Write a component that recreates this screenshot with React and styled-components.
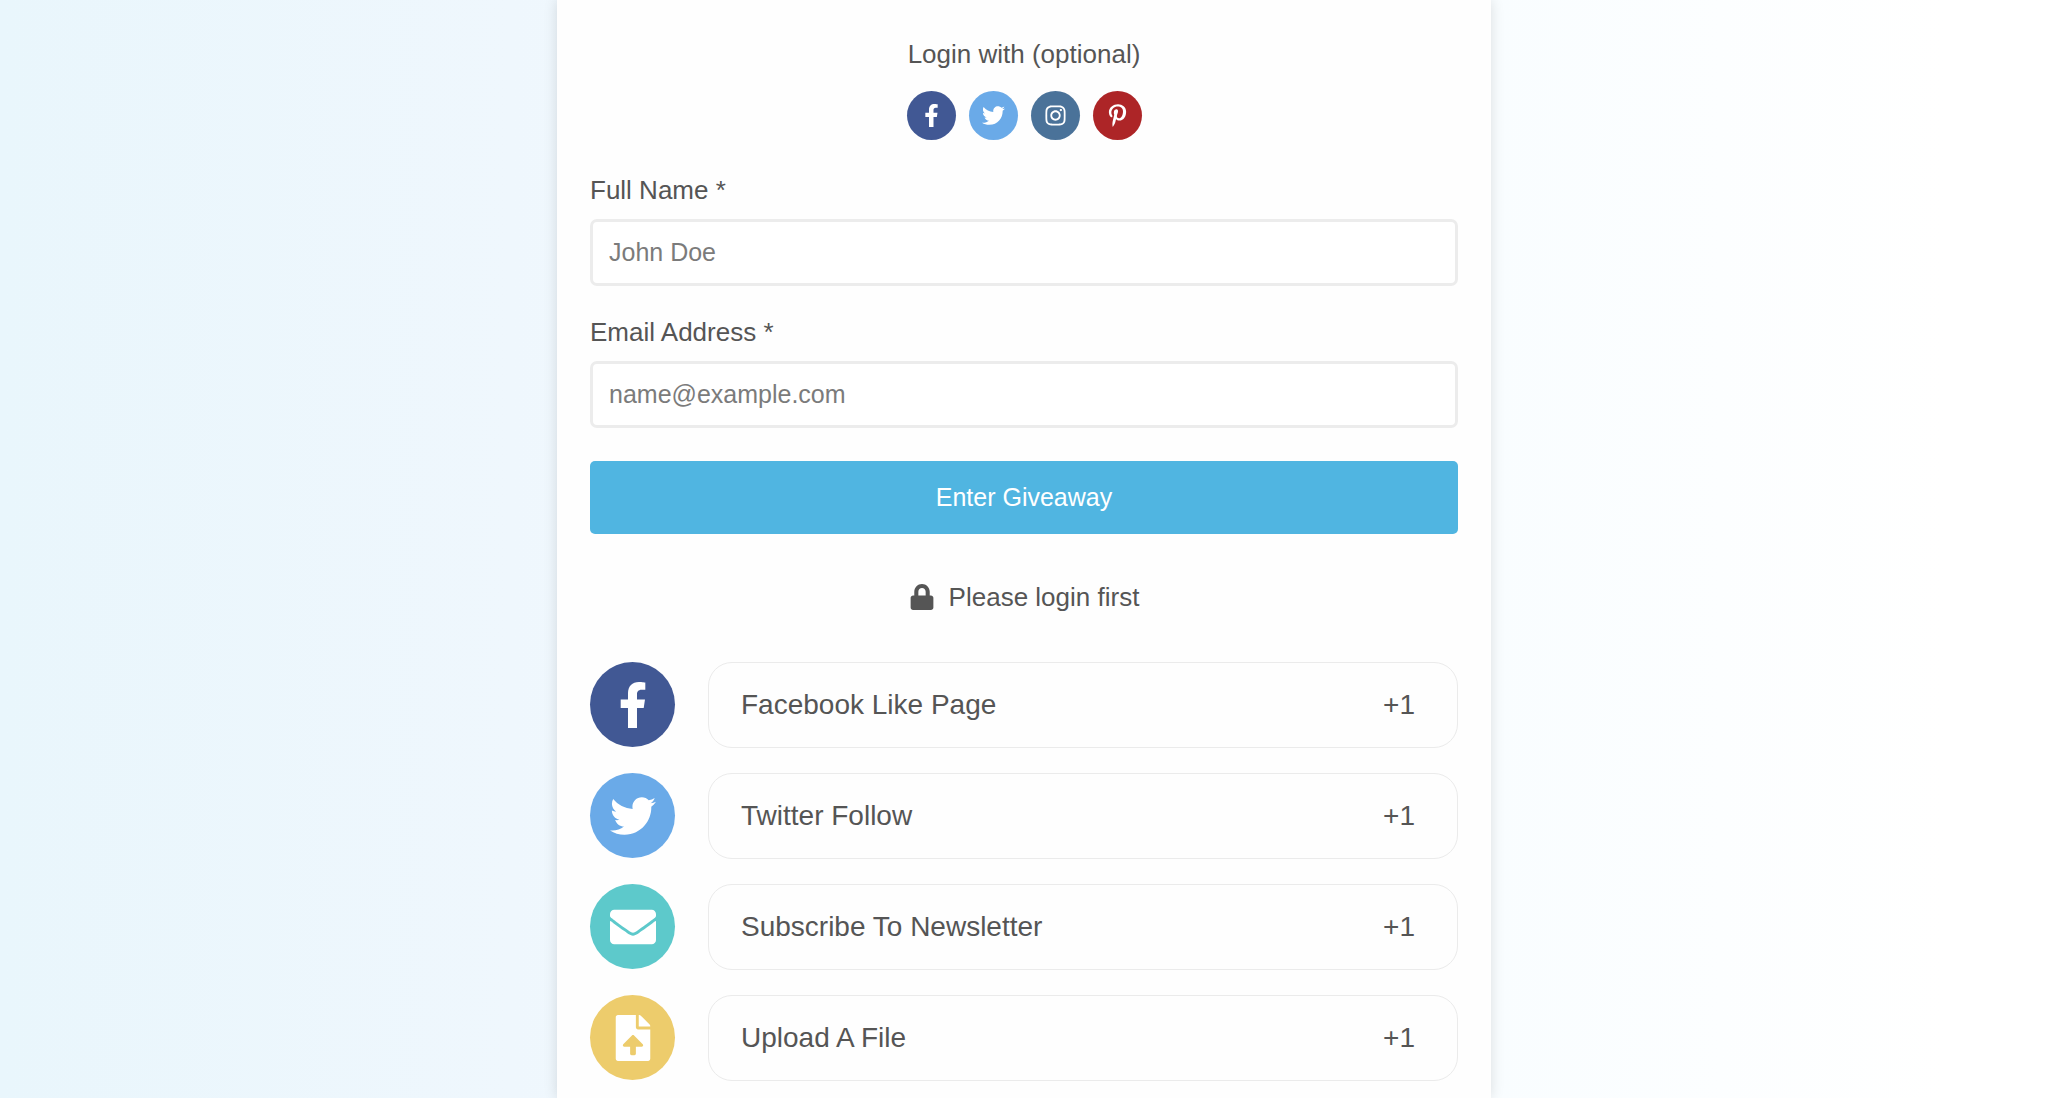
import React, { useState } from "react";
import styled, { createGlobalStyle } from "styled-components";
import {
  FaEnvelope,
  FaFacebookF,
  FaFileUpload,
  FaInstagram,
  FaLock,
  FaPinterestP,
  FaTwitter,
} from "react-icons/fa";

const networks = [
  { name: "Facebook", color: "#415894", Icon: FaFacebookF },
  { name: "Twitter", color: "#6aaae8", Icon: FaTwitter },
  { name: "Instagram", color: "#4a7299", Icon: FaInstagram },
  { name: "Pinterest", color: "#ad2527", Icon: FaPinterestP },
];

const actions = [
  { title: "Facebook Like Page", color: "#415894", Icon: FaFacebookF },
  { title: "Twitter Follow", color: "#6aaae8", Icon: FaTwitter },
  { title: "Subscribe To Newsletter", color: "#5dc9cb", Icon: FaEnvelope },
  { title: "Upload A File", color: "#edcc6c", Icon: FaFileUpload },
];

const App = () => {
  const [name, setName] = useState("");
  const [email, setEmail] = useState("");

  return (
    <>
      <GlobalStyle />
      <Page>
        <Card>
          <LoginTitle>Login with (optional)</LoginTitle>
          <Networks>
            {networks.map(({ name, color, Icon }) => (
              <NetworkButton key={name} type="button" color={color} aria-label={name}>
                <Icon />
              </NetworkButton>
            ))}
          </Networks>
          <form onSubmit={(e) => e.preventDefault()}>
            <Field>
              <Label htmlFor="name">Full Name *</Label>
              <Input
                id="name"
                type="text"
                placeholder="John Doe"
                value={name}
                onChange={(e) => setName(e.target.value)}
              />
            </Field>
            <Field>
              <Label htmlFor="email">Email Address *</Label>
              <Input
                id="email"
                type="email"
                placeholder="name@example.com"
                value={email}
                onChange={(e) => setEmail(e.target.value)}
              />
            </Field>
            <SubmitButton type="submit">Enter Giveaway</SubmitButton>
          </form>
          <Notice>
            <FaLock />
            Please login first
          </Notice>
          <ActionList>
            {actions.map(({ title, color, Icon }) => (
              <ActionItem key={title}>
                <ActionIcon color={color}>
                  <Icon />
                </ActionIcon>
                <ActionButton type="button">
                  <span>{title}</span>
                  <span>+1</span>
                </ActionButton>
              </ActionItem>
            ))}
          </ActionList>
        </Card>
      </Page>
    </>
  );
};

export default App;

const GlobalStyle = createGlobalStyle`
  * {
    box-sizing: border-box;
  }

  body {
    margin: 0;
    color: #555555;
    font-family: "Liberation Sans", Arial, sans-serif;
    font-size: 26px;
    line-height: 34px;
  }

  button,
  input {
    font-family: inherit;
  }
`;

const Page = styled.div`
  min-height: 100vh;
  display: flex;
  justify-content: center;
  background: linear-gradient(90deg, #e9f6fc 0%, #eff7fd 25%, #f9fdff 73%, #ffffff 95%);
`;

const Card = styled.main`
  width: 100%;
  max-width: 934px;
  padding: 37px 33px 16px;
  background: #fefefe;
  box-shadow: 0 0 13px rgba(0, 0, 0, 0.13);
`;

const LoginTitle = styled.div`
  text-align: center;
`;

const Networks = styled.div`
  display: flex;
  justify-content: center;
  gap: 13px;
  margin: 20px 0 33px;
`;

const NetworkButton = styled.button`
  width: 49px;
  height: 49px;
  padding: 0;
  display: flex;
  align-items: center;
  justify-content: center;
  border: none;
  border-radius: 50%;
  background: ${(props) => props.color};
  color: #ffffff;
  font-size: 23px;
  cursor: pointer;
`;

const Field = styled.div`
  margin-bottom: 29px;
`;

const Label = styled.label`
  display: block;
  margin-bottom: 12px;
`;

const Input = styled.input`
  display: block;
  width: 100%;
  height: 67px;
  padding: 0 16px;
  border: 3px solid #ececec;
  border-radius: 7px;
  background: #ffffff;
  color: #555555;
  font-size: 25px;

  &::placeholder {
    color: #7b7b7b;
  }
`;

const SubmitButton = styled.button`
  display: block;
  width: 100%;
  height: 73px;
  margin-top: 33px;
  border: none;
  border-radius: 5px;
  background: #50b5e1;
  color: #ffffff;
  font-size: 25px;
  cursor: pointer;
`;

const Notice = styled.div`
  display: flex;
  align-items: center;
  justify-content: center;
  gap: 14px;
  margin: 46px 0 48px;
`;

const ActionList = styled.ul`
  display: flex;
  flex-direction: column;
  gap: 25px;
  margin: 0;
  padding: 0;
  list-style: none;
`;

const ActionItem = styled.li`
  display: flex;
  align-items: flex-start;
  gap: 33px;
`;

const ActionIcon = styled.div`
  flex: none;
  width: 85px;
  height: 85px;
  display: flex;
  align-items: center;
  justify-content: center;
  border-radius: 50%;
  background: ${(props) => props.color};
  color: #ffffff;
  font-size: 46px;
`;

const ActionButton = styled.button`
  flex: 1;
  height: 86px;
  padding: 0 42px 0 32px;
  display: flex;
  align-items: center;
  justify-content: space-between;
  border: 1px solid #ebebeb;
  border-radius: 24px;
  background: transparent;
  color: #555555;
  font-size: 28px;
  text-align: left;
  cursor: pointer;
`;
